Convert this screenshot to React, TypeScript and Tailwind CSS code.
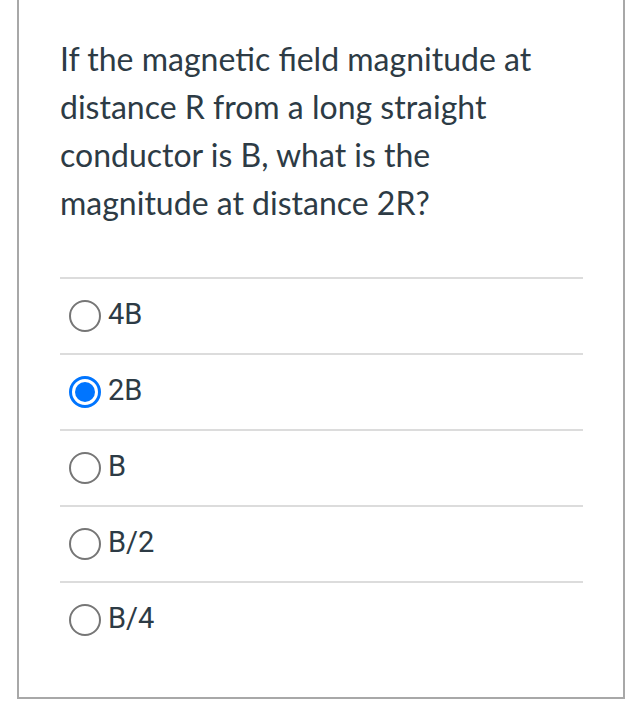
import React from "react";

const answers = [
  { label: "4B", selected: false },
  { label: "2B", selected: true },
  { label: "B", selected: false },
  { label: "B/2", selected: false },
  { label: "B/4", selected: false },
];

function Radio({ selected }: { selected: boolean }) {
  if (selected) {
    return (
      <div className="w-8 h-8 rounded-full border-[3px] border-[#0075ff] flex items-center justify-center shrink-0 bg-white">
        <div className="w-5 h-5 rounded-full bg-[#0075ff]" />
      </div>
    );
  }
  return <div className="w-8 h-8 rounded-full border-2 border-[#767676] shrink-0 bg-white" />;
}

export default function App() {
  return (
    <div className="w-[633px] h-[712px] bg-white">
      <div className="ml-[17px] w-[608px] h-[699px] border-2 border-t-0 border-[#a8a8a8] pl-[41px] pr-[40px] pt-[35px]">
        <p
          className="text-[32px] leading-[48px] text-[#2d3b45]"
          style={{ fontFamily: "Lato, 'Noto Sans', sans-serif" }}
        >
          If the magnetic field magnitude at distance R from a long straight conductor is B, what is the magnitude at distance 2R?
        </p>
        <div className="mt-[50px]">
          {answers.map((a) => (
            <div
              key={a.label}
              className="border-t-2 border-[#dcdcdc] h-[76px] flex items-center gap-[7px] pl-[9px]"
            >
              <Radio selected={a.selected} />
              <span
                className="text-[29px] leading-none text-[#2d3b45] mb-[4px]"
                style={{ fontFamily: "Roboto, 'Liberation Sans', sans-serif" }}
              >
                {a.label}
              </span>
            </div>
          ))}
        </div>
      </div>
    </div>
  );
}
